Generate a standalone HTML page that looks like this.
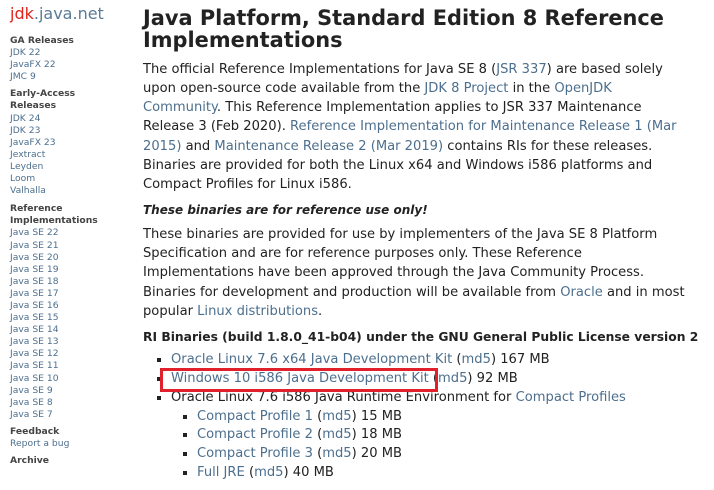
<!DOCTYPE html>
<html><head><meta charset="utf-8"><style>
body{margin:0;width:714px;height:490px;overflow:hidden;background:#fff;font-family:"DejaVu Sans","Liberation Sans",sans-serif;color:#222}
a{color:#4d6f8e;text-decoration:none}
#side{position:absolute;left:10px;top:0;width:125px;font-size:9.2px;line-height:12.1px}
#logo{position:absolute;top:4px;left:0;font-size:16px;line-height:20px;color:#5a7b96}
#logo span{color:#e2231a}
#side h4{margin:0;font-size:9.2px;font-weight:bold;color:#444}
#side a{display:block}
#main{position:absolute;left:143px;top:0;width:570px;font-size:13.1px;line-height:19.3px;white-space:nowrap}
h1{font-size:20.9px;line-height:22px;margin:7px 0 0;font-weight:bold;color:#222}
p{margin:0}
ul{margin:0;padding-left:28px;list-style:square;line-height:18.8px}
ul ul{padding-left:26px}
.box{position:relative}
.box:after{content:"";position:absolute;left:-11px;right:-9px;top:-3px;bottom:-6px;border:3px solid #e0202a}
</style></head><body>
<div id="side">
<div id="logo"><span>jdk</span>.java.net</div>
<div style="position:absolute;top:35px;width:125px">
<h4>GA Releases</h4><a>JDK 22</a><a>JavaFX 22</a><a>JMC 9</a>
<h4 style="margin-top:5px">Early-Access<br>Releases</h4><a>JDK 24</a><a>JDK 23</a><a>JavaFX 23</a><a>Jextract</a><a>Leyden</a><a>Loom</a><a>Valhalla</a>
<h4 style="margin-top:6px">Reference<br>Implementations</h4><a>Java SE 22</a><a>Java SE 21</a><a>Java SE 20</a><a>Java SE 19</a><a>Java SE 18</a><a>Java SE 17</a><a>Java SE 16</a><a>Java SE 15</a><a>Java SE 14</a><a>Java SE 13</a><a>Java SE 12</a><a>Java SE 11</a><a>Java SE 10</a><a>Java SE 9</a><a>Java SE 8</a><a>Java SE 7</a>
<h4 style="margin-top:5px">Feedback</h4><a>Report a bug</a>
<h4 style="margin-top:5px">Archive</h4>
</div></div>
<div id="main">
<h1>Java Platform, Standard Edition 8 Reference<br>Implementations</h1>
<p style="margin-top:8.5px">The official Reference Implementations for Java SE 8 (<a>JSR 337</a>) are based solely<br>upon open-source code available from the <a>JDK 8 Project</a> in the <a>OpenJDK</a><br><a>Community</a>. This Reference Implementation applies to JSR 337 Maintenance<br>Release 3 (Feb 2020). <a>Reference Implementation for Maintenance Release 1 (Mar</a><br><a>2015)</a> and <a>Maintenance Release 2 (Mar 2019)</a> contains RIs for these releases.<br>Binaries are provided for both the Linux x64 and Windows i586 platforms and<br>Compact Profiles for Linux i586.</p>
<p style="margin-top:6px;font-weight:bold;font-style:italic;font-size:12px">These binaries are for reference use only!</p>
<p style="margin-top:5px">These binaries are provided for use by implementers of the Java SE 8 Platform<br>Specification and are for reference purposes only. These Reference<br>Implementations have been approved through the Java Community Process.<br>Binaries for development and production will be available from <a>Oracle</a> and in most<br>popular <a>Linux distributions</a>.</p>
<p style="margin-top:6.5px;font-weight:bold;font-size:12.3px">RI Binaries (build 1.8.0_41-b04) under the GNU General Public License version 2</p>
<ul style="margin-top:4px">
<li><a>Oracle Linux 7.6 x64 Java Development Kit</a> (<a>md5</a>) 167 MB</li>
<li><span class="box"><a>Windows 10 i586 Java Development Kit</a></span> (<a>md5</a>) 92 MB</li>
<li>Oracle Linux 7.6 i586 Java Runtime Environment for <a>Compact Profiles</a>
<ul><li><a>Compact Profile 1</a> (<a>md5</a>) 15 MB</li><li><a>Compact Profile 2</a> (<a>md5</a>) 18 MB</li><li><a>Compact Profile 3</a> (<a>md5</a>) 20 MB</li><li><a>Full JRE</a> (<a>md5</a>) 40 MB</li></ul></li>
</ul>
</div>
</body></html>
